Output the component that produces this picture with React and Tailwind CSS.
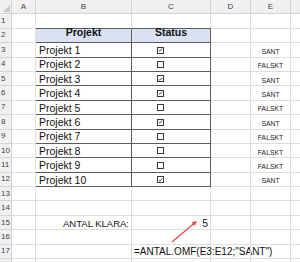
import React from "react";

const projects = [
  { name: "Projekt 1", done: true },
  { name: "Projekt 2", done: false },
  { name: "Projekt 3", done: true },
  { name: "Projekt 4", done: true },
  { name: "Projekt 5", done: false },
  { name: "Projekt 6", done: true },
  { name: "Projekt 7", done: false },
  { name: "Projekt 8", done: false },
  { name: "Projekt 9", done: false },
  { name: "Projekt 10", done: true },
];

const grid = "border-[#dedede]";
const dark = "border-[#5c5c5c]";

const Checkbox = ({ checked }) => (
  <span className="flex h-[7px] w-[7px] items-center justify-center border border-[#3a3a3a] bg-white">
    {checked && (
      <svg viewBox="0 0 8 8" className="h-[6px] w-[6px]">
        <path d="M1.2 4.2 L3.1 6 L6.8 1.8" fill="none" stroke="#222" strokeWidth="1.3" />
      </svg>
    )}
  </span>
);

// one spreadsheet row: number cell + columns A..F
const Row = ({ n, a, b, c, d, e, table, top, bHead, cHead }) => {
  const inTable = table;
  return (
    <div className="flex h-[14.4px]">
      <div className="flex w-[12px] shrink-0 items-center border-r border-b border-[#d4d4d4] bg-[#f0f0f0] pl-[1px] text-[8px] text-[#444]">
        {n}
      </div>
      <div className={`w-[24px] shrink-0 border-b ${grid} border-r ${inTable ? dark : ""}`}>{a}</div>
      <div
        className={`flex w-[96px] shrink-0 items-end border-r border-b pb-[1px] ${inTable ? dark : grid} ${top ? "!border-b-[#5c5c5c]" : ""} ${bHead ? "bg-[#d9e1f2]" : ""}`}
      >
        {b}
      </div>
      <div
        className={`flex w-[79px] shrink-0 items-end border-r border-b pb-[1px] ${inTable ? dark : grid} ${top ? "!border-b-[#5c5c5c]" : ""} ${cHead ? "bg-[#d9e1f2]" : ""}`}
      >
        {c}
      </div>
      <div className={`w-[40px] shrink-0 border-r border-b ${grid}`}>{d}</div>
      <div className={`flex w-[40px] shrink-0 items-end justify-center border-r border-b pb-[1px] ${grid}`}>{e}</div>
      <div className={`flex-1 border-b ${grid}`} />
    </div>
  );
};

export default function App() {
  return (
    <div className="relative h-[262px] w-[300px] overflow-hidden bg-white font-['Liberation_Sans',Arial,sans-serif] text-[#111]">
      {/* column letters */}
      <div className="flex h-[14.4px] bg-[#f0f0f0] text-[8px] text-[#444]">
        <div className="relative w-[12px] shrink-0 border-r border-b border-[#d4d4d4]">
          <svg viewBox="0 0 10 10" className="absolute right-[1px] bottom-[1px] h-[7px] w-[7px]">
            <path d="M10 0 L10 10 L0 10 Z" fill="#c8c8c8" />
          </svg>
        </div>
        <div className="flex w-[24px] shrink-0 items-center justify-center border-r border-b border-[#d4d4d4]">A</div>
        <div className="flex w-[96px] shrink-0 items-center justify-center border-r border-b border-[#d4d4d4]">B</div>
        <div className="flex w-[79px] shrink-0 items-center justify-center border-r border-b border-[#d4d4d4]">C</div>
        <div className="flex w-[40px] shrink-0 items-center justify-center border-r border-b border-[#d4d4d4]">D</div>
        <div className="flex w-[40px] shrink-0 items-center justify-center border-r border-b border-[#d4d4d4]">E</div>
        <div className="flex-1 border-b border-[#d4d4d4]" />
      </div>

      <Row n={1} top />
      <Row
        n={2}
        table
        bHead
        cHead
        b={<span className="w-full text-center text-[10.5px] font-bold">Projekt</span>}
        c={<span className="w-full text-center text-[10.5px] font-bold">Status</span>}
      />
      {projects.map((p, i) => (
        <Row
          key={p.name}
          n={i + 3}
          table
          b={<span className="pl-[3px] text-[10.5px] leading-none">{p.name}</span>}
          c={
            <span className="pb-[2px] pl-[25px]">
              <Checkbox checked={p.done} />
            </span>
          }
          e={<span className="text-[6.8px] leading-none text-[#222]">{p.done ? "SANT" : "FALSKT"}</span>}
        />
      ))}
      <Row n={13} />
      <Row n={14} />
      <Row
        n={15}
        b={<span className="w-full pr-[2px] text-right text-[9.5px] leading-none">ANTAL KLARA:</span>}
        c={<span className="w-full pr-[2px] text-right text-[10.5px] leading-none">5</span>}
      />
      <Row n={16} />
      <Row
        n={17}
        c={
          <span className="whitespace-nowrap pl-[2px] text-[10px] leading-none">
            =ANTAL.OMF(E3:E12;"SANT")
          </span>
        }
      />
      <Row n={18} />

      {/* pointer from formula to result */}
      <svg className="absolute top-0 left-0 h-[262px] w-[300px]" viewBox="0 0 300 262">
        <line x1="172" y1="242" x2="194" y2="223.5" stroke="#e8453c" strokeWidth="1.2" />
        <path d="M197 221 L191.5 222.2 L194.6 225.8 Z" fill="#e8453c" />
      </svg>
    </div>
  );
}
